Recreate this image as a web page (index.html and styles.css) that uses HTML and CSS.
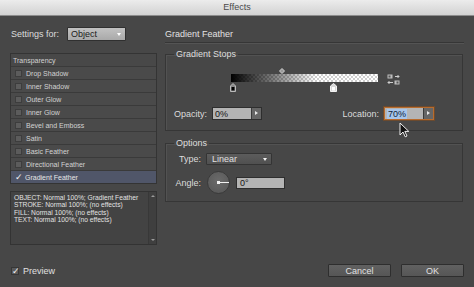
FILE: index.html
```html
<!DOCTYPE html>
<html lang="en">
<head>
  <meta charset="UTF-8">
  <title>Effects</title>
  <link rel="stylesheet" href="styles.css">
</head>
<body>
<div class="dialog">
  <div class="titlebar">Effects</div>

  <div class="content">
    <!-- left column: target + effect list -->
    <div class="left">
      <div class="settings-row">
        <span class="settings-label">Settings for:</span>
        <div class="select select-light"><span>Object</span><span class="caret"></span></div>
      </div>

      <ul class="fx-list">
        <li class="fx-head">Transparency</li>
        <li><span class="box"></span>Drop Shadow</li>
        <li><span class="box"></span>Inner Shadow</li>
        <li><span class="box"></span>Outer Glow</li>
        <li><span class="box"></span>Inner Glow</li>
        <li><span class="box"></span>Bevel and Emboss</li>
        <li><span class="box"></span>Satin</li>
        <li><span class="box"></span>Basic Feather</li>
        <li><span class="box"></span>Directional Feather</li>
        <li class="active"><span class="check">&#10003;</span>Gradient Feather</li>
      </ul>

      <div class="summary">
        <div class="summary-text">
          OBJECT: Normal 100%; Gradient Feather<br>
          STROKE: Normal 100%; (no effects)<br>
          FILL: Normal 100%; (no effects)<br>
          TEXT: Normal 100%; (no effects)
        </div>
        <div class="scrollbar">
          <span class="arrow-up"></span>
          <span class="arrow-down"></span>
        </div>
      </div>
    </div>

    <!-- right column: effect settings -->
    <div class="right">
      <div class="panel-title">Gradient Feather</div>

      <fieldset class="group group-stops">
        <legend>Gradient Stops</legend>
        <div class="ramp-row">
          <div class="ramp">
            <div class="ramp-bar"></div>
            <svg class="mid-point" width="6" height="6" viewBox="0 0 6 6">
              <path d="M3 0.5 L5.5 3 L3 5.5 L0.5 3 Z" fill="#9a9a9a" stroke="#d0d0d0" stroke-width="1"/>
            </svg>
            <svg class="stop stop-start" width="6" height="9" viewBox="0 0 6 9">
              <path d="M3 0.5 L5.5 3 L5.5 8.5 L0.5 8.5 L0.5 3 Z" fill="#888" stroke="#bbb" stroke-width="1"/>
              <rect x="1.5" y="4" width="3" height="3.5" fill="#000"/>
            </svg>
            <svg class="stop stop-end" width="7" height="9" viewBox="0 0 7 9">
              <path d="M3.5 0.5 L6.5 3 L6.5 8.5 L0.5 8.5 L0.5 3 Z" fill="#d8d8d8" stroke="#f2f2f2" stroke-width="1"/>
              <rect x="2" y="4" width="3" height="3.5" fill="#fff"/>
            </svg>
          </div>
          <svg class="reverse-icon" width="13" height="13" viewBox="0 0 13 13">
            <rect x="0.5" y="1.5" width="5" height="4" fill="#bdbdbd"/>
            <rect x="1.5" y="2.5" width="2" height="2" fill="#555"/>
            <path d="M8 3.5 H12 M10.5 2 L12 3.5 L10.5 5" stroke="#d0d0d0" fill="none"/>
            <rect x="7.5" y="7.5" width="5" height="4" fill="#bdbdbd"/>
            <rect x="9.5" y="8.5" width="2" height="2" fill="#555"/>
            <path d="M6 9.5 H1 M2.5 8 L1 9.5 L2.5 11" stroke="#d0d0d0" fill="none"/>
          </svg>
        </div>
        <div class="field-row">
          <span class="label">Opacity:</span>
          <div class="field field-opacity"><span class="value">0%</span><span class="step"></span></div>
          <span class="label label-location">Location:</span>
          <div class="field field-location"><span class="value"><span class="selected">70%</span></span><span class="step"></span></div>
        </div>
      </fieldset>

      <fieldset class="group group-options">
        <legend>Options</legend>
        <div class="opt-row opt-type">
          <span class="opt-label">Type:</span>
          <div class="select select-dark"><span>Linear</span><span class="caret"></span></div>
        </div>
        <div class="opt-row opt-angle">
          <span class="opt-label">Angle:</span>
          <div class="dial"><span class="dial-hand"></span></div>
          <div class="angle-field">0°</div>
        </div>
      </fieldset>
    </div>
  </div>

  <div class="footer">
    <label class="preview"><span class="preview-box">&#10003;</span>Preview</label>
    <div class="buttons">
      <button class="btn">Cancel</button>
      <button class="btn">OK</button>
    </div>
  </div>

  <!-- mouse pointer over the location field -->
  <svg class="cursor" width="11" height="16" viewBox="0 0 11 16">
    <path d="M1 1 L1 13 L4 10 L6.2 14.8 L8 14 L5.8 9.4 L9.8 9.4 Z" fill="#111" stroke="#eee" stroke-width="1"/>
  </svg>
</div>
</body>
</html>
```

FILE: styles.css
```css
/* Dialog shell */
body {
  margin: 0;
  padding: 0;
  background-color: #474747;
  font-family: "Liberation Sans", Arial, sans-serif;
  color: #d8d8d8;
}

.dialog {
  position: relative;
  width: 474px;
  height: 287px;
  display: flex;
  flex-direction: column;
  overflow: hidden;
  background-color: #474747;
}

.titlebar {
  height: 15px;
  line-height: 15px;
  text-align: center;
  font-size: 9px;
  color: #4a4a4a;
  background: linear-gradient(#ececec, #d2d2d2);
  border-bottom: 1px solid #8c8c8c;
}

.content {
  display: flex;
  gap: 8px;
  padding: 11px 10px 0 10px;
}

/* Left column */
.left {
  width: 147px;
  display: flex;
  flex-direction: column;
}

.settings-row {
  display: flex;
  align-items: center;
  height: 14px;
  margin-bottom: 12px;
}

.settings-label {
  width: 56px;
  padding-left: 1px;
  font-size: 9px;
  color: #dcdcdc;
}

.select {
  position: relative;
  box-sizing: border-box;
  display: flex;
  align-items: center;
  font-size: 9px;
  border: 1px solid #303030;
  border-radius: 1px;
}

.select-light {
  width: 59px;
  height: 14px;
  padding-left: 3px;
  background: linear-gradient(#c2c2c2, #a9a9a9);
  color: #1c1c1c;
}

.select-dark {
  width: 66px;
  height: 12px;
  padding-left: 5px;
  background: linear-gradient(#5c5c5c, #505050);
  color: #e0e0e0;
  border-color: #343434;
}

.caret {
  position: absolute;
  right: 4px;
  top: 50%;
  margin-top: -1px;
  border-left: 2.5px solid transparent;
  border-right: 2.5px solid transparent;
  border-top: 3px solid #f2f2f2;
}

.select-light .caret {
  border-top-color: #fff;
}

.fx-list {
  list-style: none;
  margin: 0;
  padding: 0;
  border: 1px solid #343434;
  background-color: #474747;
}

.fx-list li {
  display: flex;
  align-items: center;
  height: 12px;
  padding-left: 4px;
  font-size: 7px;
  color: #d2d2d2;
  border-bottom: 1px solid #3a3a3a;
  background-color: #4a4a4a;
}

.fx-list li:last-child {
  border-bottom: none;
}

.fx-list .fx-head {
  padding-left: 2px;
  background-color: #484848;
}

.fx-list .box {
  width: 5px;
  height: 5px;
  margin-right: 4px;
  background-color: #5c5c5c;
  border: 1px solid #3d3d3d;
}

.fx-list .active {
  background-color: #505669;
  color: #e6e6e6;
}

.fx-list .check {
  width: 10px;
  font-size: 9px;
  color: #f4f4f4;
}

.summary {
  display: flex;
  margin-top: 7px;
  height: 54px;
  box-sizing: border-box;
  border: 1px solid #333;
  background-color: #434343;
}

.summary-text {
  flex: 1;
  padding: 2px 0 0 3px;
  font-size: 6.7px;
  line-height: 7.3px;
  color: #e2e2e2;
}

.scrollbar {
  width: 7px;
  display: flex;
  flex-direction: column;
  justify-content: space-between;
  align-items: center;
  padding: 3px 0;
  border-left: 1px solid #383838;
  background-color: #3f3f3f;
}

.arrow-up {
  border-left: 2px solid transparent;
  border-right: 2px solid transparent;
  border-bottom: 2px solid #9a9a9a;
}

.arrow-down {
  border-left: 2px solid transparent;
  border-right: 2px solid transparent;
  border-top: 2px solid #9a9a9a;
}

/* Right column */
.right {
  width: 299px;
  display: flex;
  flex-direction: column;
}

.panel-title {
  height: 14px;
  line-height: 14px;
  padding-bottom: 1px;
  font-size: 9px;
  color: #e2e2e2;
  border-bottom: 1px solid #363636;
  box-shadow: 0 1px 0 #545454;
}

.group {
  box-sizing: border-box;
  margin: 0;
  padding: 0;
  width: 298px;
  border: 1px solid #363636;
  box-shadow: inset 1px 1px 0 #525252;
}

.group legend {
  margin-left: 8px;
  padding: 0 2px;
  font-size: 9px;
  line-height: 12px;
  color: #dedede;
}

.group-stops {
  margin-top: 5px;
  height: 83px;
}

.ramp-row {
  display: flex;
  align-items: flex-start;
  margin-top: 10px;
  padding-left: 65px;
  height: 22px;
}

.ramp {
  position: relative;
  width: 147px;
  height: 22px;
}

.ramp-bar {
  position: absolute;
  top: 4px;
  left: 0;
  width: 147px;
  height: 8px;
  background-image:
    linear-gradient(to right, #000 0%, rgba(0, 0, 0, 0) 58%),
    conic-gradient(#cfcfcf 25%, #fff 0 50%, #cfcfcf 0 75%, #fff 0);
  background-size: 100% 100%, 4px 4px;
}

.mid-point {
  position: absolute;
  top: -2px;
  left: 48px;
}

.stop {
  position: absolute;
  top: 13px;
}

.stop-start {
  left: -1px;
}

.stop-end {
  left: 99px;
}

.reverse-icon {
  margin-left: 9px;
  margin-top: 3px;
}

.field-row {
  display: flex;
  align-items: center;
  margin-top: 15px;
  height: 13px;
  padding: 0 28px 0 8px;
}

.label {
  font-size: 9px;
  color: #dcdcdc;
  margin-right: 5px;
}

.label-location {
  margin-left: auto;
}

.field {
  box-sizing: border-box;
  display: flex;
  height: 13px;
  border: 1px solid #2e2e2e;
}

.field-opacity {
  width: 50px;
}

.field-location {
  width: 50px;
  border: 1px solid #b86b2c;
  box-shadow: 0 0 0 1px #6c4a2e;
}

.field .value {
  flex: 1;
  display: flex;
  align-items: center;
  padding-left: 2px;
  font-size: 9px;
  color: #151515;
  background-color: #b4b4b4;
}

.field .selected {
  background-color: #a7c5ea;
  color: #0e1e36;
  padding: 0 1px;
}

.field .step {
  position: relative;
  width: 9px;
  background-color: #666;
  border-left: 1px solid #3a3a3a;
}

.field .step::after {
  content: "";
  position: absolute;
  left: 3px;
  top: 3px;
  border-top: 2px solid transparent;
  border-bottom: 2px solid transparent;
  border-left: 3px solid #e8e8e8;
}

.group-options {
  margin-top: 6px;
  height: 65px;
}

.opt-row {
  display: flex;
  align-items: center;
  padding-left: 8px;
}

.opt-type {
  margin-top: 4px;
  height: 12px;
}

.opt-angle {
  margin-top: 6px;
  height: 23px;
}

.opt-label {
  width: 27px;
  margin-right: 5px;
  text-align: right;
  font-size: 9px;
  color: #dcdcdc;
}

.opt-angle .opt-label {
  margin-right: 6px;
}

.dial {
  position: relative;
  box-sizing: border-box;
  width: 23px;
  height: 23px;
  border-radius: 50%;
  background: radial-gradient(circle at 50% 40%, #6a6a6a, #555);
  border: 1px solid #3a3a3a;
}

.dial-hand {
  position: absolute;
  left: 10px;
  top: 10px;
  width: 11px;
  height: 1px;
  background-color: #f0f0f0;
}

.dial-hand::before {
  content: "";
  position: absolute;
  left: -1px;
  top: -1px;
  width: 3px;
  height: 3px;
  background-color: #f0f0f0;
}

.angle-field {
  box-sizing: border-box;
  width: 49px;
  height: 12px;
  margin-left: 6px;
  padding-left: 3px;
  font-size: 9px;
  line-height: 10px;
  color: #151515;
  background-color: #b4b4b4;
  border: 1px solid #2e2e2e;
}

/* Footer */
.footer {
  margin-top: auto;
  display: flex;
  align-items: center;
  justify-content: space-between;
  height: 13px;
  padding: 0 10px 10px 11px;
}

.preview {
  display: flex;
  align-items: center;
  font-size: 9px;
  color: #e0e0e0;
}

.preview-box {
  box-sizing: border-box;
  width: 8px;
  height: 8px;
  margin-right: 4px;
  font-size: 9px;
  line-height: 6px;
  color: #f4f4f4;
  background-color: #5a5a5a;
  border: 1px solid #363636;
}

.buttons {
  display: flex;
  gap: 10px;
}

.btn {
  width: 63px;
  height: 13px;
  padding: 0;
  font-family: "Liberation Sans", Arial, sans-serif;
  font-size: 9px;
  color: #e2e2e2;
  background: linear-gradient(#616161, #565656);
  border: 1px solid #2e2e2e;
  border-radius: 1px;
}

.cursor {
  position: absolute;
  left: 399px;
  top: 122px;
}
```
